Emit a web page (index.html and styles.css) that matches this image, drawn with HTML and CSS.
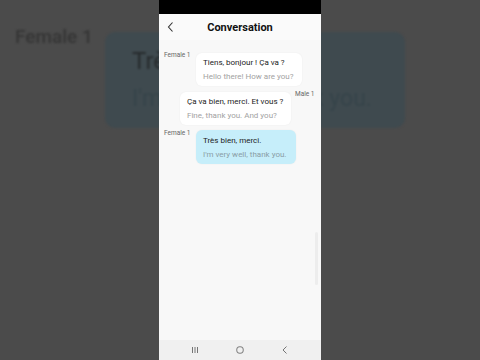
FILE: index.html
```html
<!DOCTYPE html>
<html>
<head>
<meta charset="utf-8">
<link rel="stylesheet" href="styles.css">
</head>
<body>
<div class="stage">
  <div class="backdrop">
    <div class="bd-label">Female 1</div>
    <div class="bd-bubble">
      <div class="bd-fr">Très bien, merci.</div>
      <div class="bd-en">I'm very well, thank you.</div>
    </div>
  </div>
  <div class="phone">
    <div class="status"></div>
    <div class="header">
      <svg class="back" width="10" height="12" viewBox="0 0 10 12"><path d="M6.5 1.5 L2.5 6 L6.5 10.5" fill="none" stroke="#333" stroke-width="1.1"/></svg>
      <div class="title">Conversation</div>
    </div>
    <div class="chat">
      <div class="row left">
        <div class="who">Female 1</div>
        <div class="bubble">
          <div class="fr">Tiens, bonjour ! Ça va ?</div>
          <div class="en">Hello there! How are you?</div>
        </div>
      </div>
      <div class="row right">
        <div class="bubble">
          <div class="fr">Ça va bien, merci. Et vous ?</div>
          <div class="en">Fine, thank you. And you?</div>
        </div>
        <div class="who">Male 1</div>
      </div>
      <div class="row left">
        <div class="who">Female 1</div>
        <div class="bubble active">
          <div class="fr">Très bien, merci.</div>
          <div class="en">I'm very well, thank you.</div>
        </div>
      </div>
      <div class="scrollbar"></div>
    </div>
    <div class="navbar">
      <svg width="10" height="10" viewBox="0 0 10 10"><path d="M2.5 2v6M5 2v6M7.5 2v6" stroke="#666" stroke-width="0.9"/></svg>
      <svg width="10" height="10" viewBox="0 0 10 10"><rect x="1.8" y="1.8" width="6.4" height="6.4" rx="2.4" fill="none" stroke="#666" stroke-width="0.9"/></svg>
      <svg width="10" height="10" viewBox="0 0 10 10"><path d="M6.5 1.5 L3 5 L6.5 8.5" fill="none" stroke="#666" stroke-width="0.9"/></svg>
    </div>
  </div>
</div>
</body>
</html>
```

FILE: styles.css
```css
* { box-sizing: border-box; }
html, body { margin: 0; padding: 0; }
body {
  width: 480px;
  height: 360px;
  overflow: hidden;
  background: #4b4b4b;
  font-family: Roboto, "Noto Sans", sans-serif;
}
.stage {
  position: relative;
  width: 480px;
  height: 360px;
  display: flex;
  justify-content: center;
}
.backdrop {
  position: absolute;
  left: 0;
  top: 0;
  width: 480px;
  height: 360px;
  filter: blur(0.8px);
}
.bd-label {
  position: absolute;
  left: 15px;
  top: 25px;
  font-size: 19px;
  font-weight: 500;
  color: #353535;
}
.bd-bubble {
  position: absolute;
  left: 105px;
  top: 32px;
  width: 300px;
  height: 96px;
  background: #3f4a4f;
  border-radius: 10px;
  padding: 14px 0 0 27px;
}
.bd-fr {
  font-size: 24px;
  color: #262a2c;
  line-height: 30px;
}
.bd-en {
  margin-top: 8px;
  font-size: 23px;
  color: #36444a;
  line-height: 30px;
}
.phone {
  position: relative;
  width: 162px;
  height: 360px;
  background: #f8f8f8;
  display: flex;
  flex-direction: column;
}
.status {
  height: 14px;
  background: #000;
}
.header {
  height: 26px;
  background: #fafafa;
  position: relative;
  display: flex;
  align-items: center;
  justify-content: center;
}
.back {
  position: absolute;
  left: 7px;
  top: 7px;
}
.title {
  font-size: 11px;
  font-weight: 700;
  color: #111;
}
.chat {
  flex: 1;
  position: relative;
  padding-top: 13px;
  display: flex;
  flex-direction: column;
  gap: 6px;
}
.row {
  display: flex;
  align-items: flex-start;
}
.row.left { padding-left: 5px; }
.row.right { padding-left: 21px; }
.who {
  font-size: 6.5px;
  color: #666;
  line-height: 8px;
  white-space: nowrap;
}
.row.left .who { width: 32px; margin-top: -2px; }
.row.right .who { margin-left: 4px; margin-top: -2px; }
.bubble {
  background: #fff;
  border-radius: 6px;
  padding: 4px 7px 3px 7px;
  box-shadow: 0 0 2px rgba(0,0,0,0.06);
}
.row.left .bubble { width: 106px; }
.row.right .bubble { width: 111px; }
.bubble.active {
  background: #c6eefa;
  width: 100px !important;
  margin-top: -1px;
  height: 34px;
}
.fr {
  font-size: 8px;
  line-height: 12px;
  color: #222;
  white-space: nowrap;
}
.en {
  margin-top: 2px;
  font-size: 8px;
  line-height: 12px;
  color: #a2a2a2;
  white-space: nowrap;
}
.active .fr { margin-top: 1px; }
.active .en { color: #8a9da5; }
.scrollbar {
  position: absolute;
  right: 3px;
  top: 192px;
  width: 3px;
  height: 53px;
  background: #ededed;
  border-radius: 2px;
}
.navbar {
  height: 20px;
  background: #f0f0f0;
  display: flex;
  align-items: center;
  justify-content: center;
  gap: 35px;
}
```
